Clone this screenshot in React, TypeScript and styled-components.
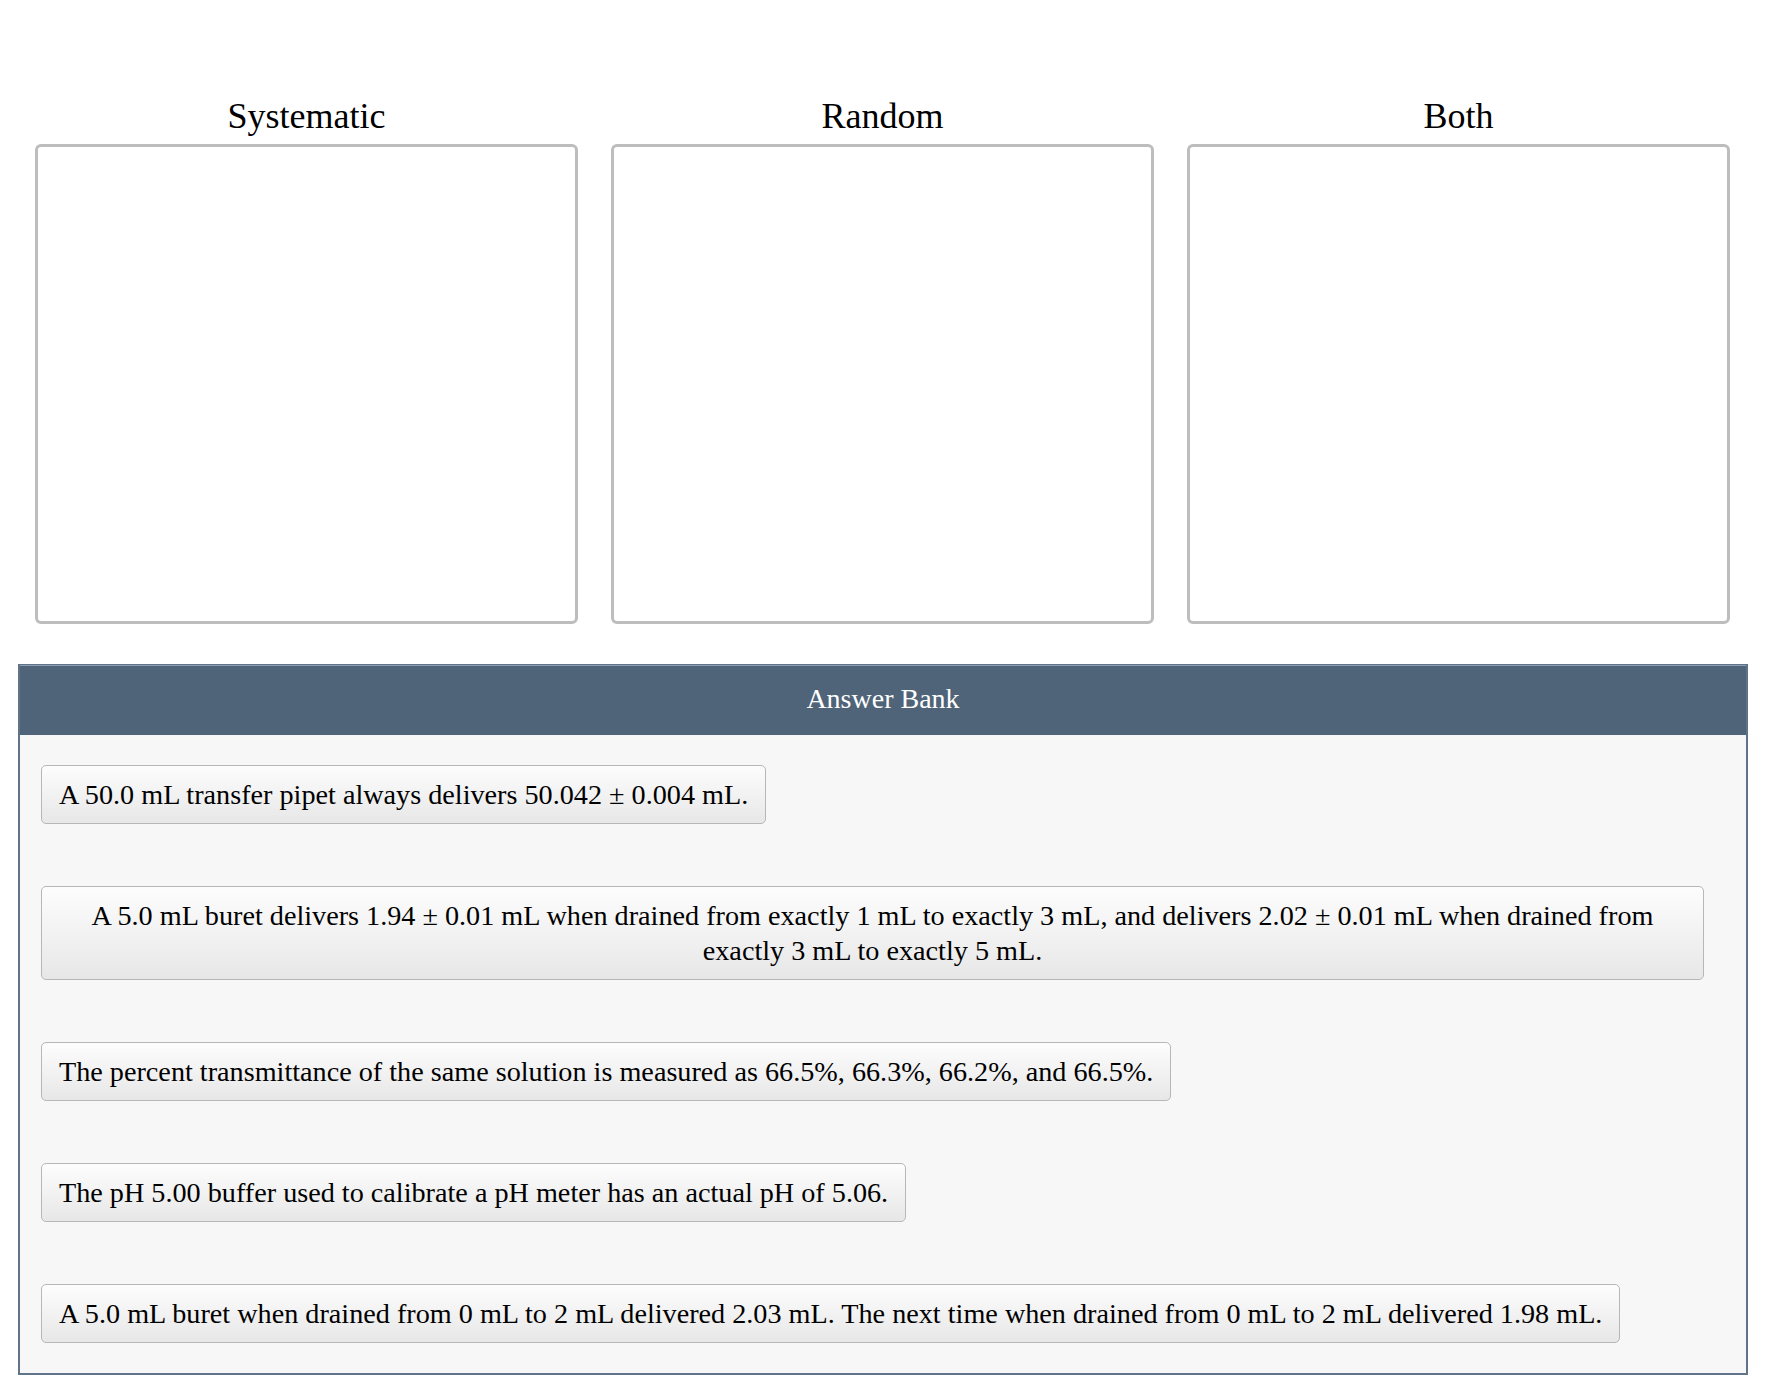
import * as React from "react";
import styled, { createGlobalStyle } from "styled-components";

const GlobalStyle = createGlobalStyle`
    html, body {
        margin: 0;
        padding: 0;
        background: #ffffff;
    }
    body {
        font-family: "Liberation Serif", "Times New Roman", serif;
        color: #000;
    }
`;

const Page = styled.div`
    width: 1730px;
    margin-left: 18px;
    padding-top: 96px;
    padding-bottom: 20px;
`;

const Buckets = styled.div`
    display: grid;
    grid-template-columns: repeat(3, 1fr);
    column-gap: 33px;
    padding: 0 18px 0 17px;
`;

const Bucket = styled.div`
    display: flex;
    flex-direction: column;
`;

const BucketTitle = styled.h3`
    margin: 0 0 8px;
    font-weight: normal;
    font-size: 36px;
    line-height: 40px;
    text-align: center;
`;

const DropZone = styled.div`
    height: 480px;
    box-sizing: border-box;
    border: 3px solid #bdbdbd;
    border-radius: 6px;
    background: #fff;
`;

const Bank = styled.section`
    margin-top: 40px;
    border: 2px solid #5f7389;
    background: #f7f7f7;
`;

const BankHeader = styled.div`
    height: 70px;
    box-sizing: border-box;
    padding-bottom: 4px;
    display: flex;
    align-items: center;
    justify-content: center;
    background: #4f6479;
    border-top: 1px solid #8e9db0;
    margin-top: -1px;
    color: #fff;
    font-size: 28px;
`;

const BankItems = styled.div`
    display: flex;
    flex-direction: column;
    align-items: flex-start;
    gap: 62px;
    padding: 30px 0 30px 21px;
`;

const Chip = styled.div`
    box-sizing: border-box;
    max-width: 1663px;
    padding: 11px 17px;
    border: 1px solid #b7b7b7;
    border-radius: 5px;
    background: linear-gradient(to bottom, #fdfdfd, #e7e7e7);
    color: #000;
    font-size: 28.2px;
    line-height: 35px;
    text-align: center;
`;

const buckets = ["Systematic", "Random", "Both"];

const answers = [
    "A 50.0 mL transfer pipet always delivers 50.042 \u00b1 0.004 mL.",
    "A 5.0 mL buret delivers 1.94 \u00b1 0.01 mL when drained from exactly 1 mL to exactly 3 mL, and delivers 2.02 \u00b1 0.01 mL when drained from exactly 3 mL to exactly 5 mL.",
    "The percent transmittance of the same solution is measured as 66.5%, 66.3%, 66.2%, and 66.5%.",
    "The pH 5.00 buffer used to calibrate a pH meter has an actual pH of 5.06.",
    "A 5.0 mL buret when drained from 0 mL to 2 mL delivered 2.03 mL. The next time when drained from 0 mL to 2 mL delivered 1.98 mL.",
];

export default function App() {
    return (
        <>
            <GlobalStyle />
            <Page>
                <Buckets>
                    {buckets.map(name => (
                        <Bucket key={name}>
                            <BucketTitle>{name}</BucketTitle>
                            <DropZone />
                        </Bucket>
                    ))}
                </Buckets>
                <Bank>
                    <BankHeader>Answer Bank</BankHeader>
                    <BankItems>
                        {answers.map(text => (
                            <Chip key={text}>{text}</Chip>
                        ))}
                    </BankItems>
                </Bank>
            </Page>
        </>
    );
}
